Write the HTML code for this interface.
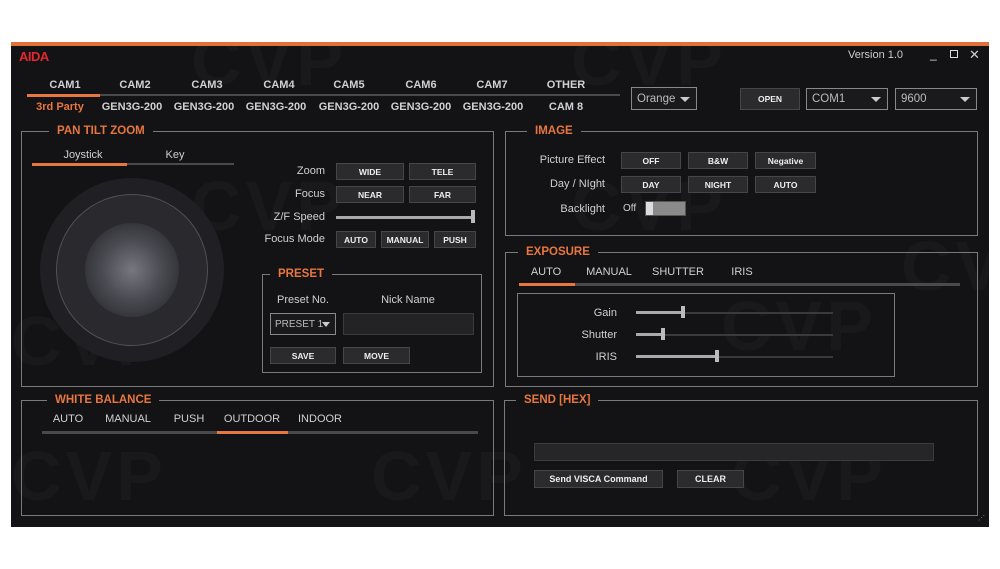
<!DOCTYPE html>
<html><head><meta charset="utf-8"><style>
*{margin:0;padding:0;box-sizing:border-box}
body{width:1000px;height:569px;background:#fff;position:relative;overflow:hidden;font-family:"Liberation Sans",sans-serif}
.a{position:absolute}
#win{position:absolute;left:11px;top:42px;width:978px;height:485px;background:#131315;border-top:4px solid #e0713a;overflow:hidden}
.t{position:absolute;color:#d0d0d0;font-size:11px;white-space:nowrap}
.c{transform:translateX(-50%)}
.r{transform:translateX(-100%)}
.b{font-weight:bold}
.o{color:#e8763f}
.box{position:absolute;border:1px solid #7a7a7a}
.ttl{position:absolute;background:#131315;color:#e8763f;font-weight:bold;font-size:11.5px;padding:0 8px;top:-8px;line-height:14px}
.btn{position:absolute;background:#2b2b2d;border:1px solid #464648;color:#eee;font-weight:bold;font-size:8.5px;text-align:center;display:flex;align-items:center;justify-content:center}
.dd{position:absolute;border:1px solid #888;background:#1a1a1c;color:#bbb;font-size:11.5px;padding-left:5px;display:flex;align-items:center}
.dd i{position:absolute;right:6px;top:50%;margin-top:-2px;border-left:5px solid transparent;border-right:5px solid transparent;border-top:5px solid #ccc}
.ln{position:absolute;height:3px;background:#4a4a4c}
.ol{position:absolute;height:3px;background:#e8763f}
.wm{position:absolute;color:#19191c;font-size:70px;font-weight:bold;letter-spacing:4px}
</style></head><body>
<div id="win">
<div class="wm" style="left:180px;top:-25px">CVP</div>
<div class="wm" style="left:560px;top:-25px">CVP</div>
<div class="wm" style="left:180px;top:120px">CVP</div>
<div class="wm" style="left:560px;top:120px">CVP</div>
<div class="wm" style="left:710px;top:240px">CVP</div>
<div class="wm" style="left:0px;top:255px">CVP</div>
<div class="wm" style="left:360px;top:390px">CVP</div>
<div class="wm" style="left:0px;top:390px">CVP</div>
<div class="wm" style="left:720px;top:390px">CVP</div>
<div class="wm" style="left:890px;top:180px">CV</div>
</div>
<div class="a" style="left:0;top:0">
<div class="t b" style="left:19px;top:49px;color:#e0282e;font-size:13px;letter-spacing:-0.5px">AIDA</div>
<div class="t" style="left:848px;top:49px;color:#ccc">Version 1.0</div>
<div class="t" style="left:930px;top:47px;color:#ddd;font-size:12px">_</div>
<div class="a" style="left:950px;top:50px;width:8px;height:8px;border:1px solid #ddd"></div>
<div class="t" style="left:969px;top:47px;font-size:13px">✕</div>

<div class="t b c" style="left:65px;top:79px">CAM1</div>
<div class="t b c" style="left:135px;top:79px">CAM2</div>
<div class="t b c" style="left:207px;top:79px">CAM3</div>
<div class="t b c" style="left:279px;top:79px">CAM4</div>
<div class="t b c" style="left:349px;top:79px">CAM5</div>
<div class="t b c" style="left:421px;top:79px">CAM6</div>
<div class="t b c" style="left:492px;top:79px">CAM7</div>
<div class="t b c" style="left:566px;top:79px">OTHER</div>
<div class="ln" style="left:27px;top:94px;width:593px;height:2px"></div>
<div class="ol" style="left:27px;top:94px;width:73px;height:3px"></div>
<div class="t b c o" style="left:60px;top:101px">3rd Party</div>
<div class="t b c" style="left:132px;top:101px">GEN3G-200</div>
<div class="t b c" style="left:204px;top:101px">GEN3G-200</div>
<div class="t b c" style="left:276px;top:101px">GEN3G-200</div>
<div class="t b c" style="left:349px;top:101px">GEN3G-200</div>
<div class="t b c" style="left:421px;top:101px">GEN3G-200</div>
<div class="t b c" style="left:493px;top:101px">GEN3G-200</div>
<div class="t b c" style="left:566px;top:101px">CAM 8</div>

<div class="dd" style="left:631px;top:87px;width:66px;height:23px">Orange<i></i></div>
<div class="btn" style="left:740px;top:88px;width:60px;height:22px">OPEN</div>
<div class="dd" style="left:806px;top:88px;width:82px;height:22px">COM1<i></i></div>
<div class="dd" style="left:895px;top:88px;width:82px;height:22px">9600<i></i></div>

<!-- PTZ -->
<div class="box" style="left:21px;top:131px;width:473px;height:256px"><div class="ttl" style="left:27px">PAN TILT ZOOM</div></div>
<div class="t c" style="left:83px;top:149px">Joystick</div>
<div class="t c" style="left:175px;top:149px">Key</div>
<div class="ln" style="left:32px;top:163px;width:202px;height:2px"></div>
<div class="ol" style="left:32px;top:163px;width:95px"></div>
<div class="a" style="left:40px;top:178px;width:184px;height:184px;border-radius:50%;background:#202024"></div>
<div class="a" style="left:56px;top:194px;width:152px;height:152px;border-radius:50%;background:#29292e;border:1px solid #505056"></div>
<div class="a" style="left:85px;top:223px;width:94px;height:94px;border-radius:50%;background:radial-gradient(circle at 50% 50%,#777780 0%,#4a4a52 45%,#1e1e22 100%)"></div>

<div class="t r" style="left:325px;top:165px">Zoom</div>
<div class="btn" style="left:336px;top:163px;width:68px;height:17px">WIDE</div>
<div class="btn" style="left:409px;top:163px;width:67px;height:17px">TELE</div>
<div class="t r" style="left:325px;top:188px">Focus</div>
<div class="btn" style="left:336px;top:186px;width:68px;height:17px">NEAR</div>
<div class="btn" style="left:409px;top:186px;width:67px;height:17px">FAR</div>
<div class="t r" style="left:325px;top:211px">Z/F Speed</div>
<div class="a" style="left:336px;top:216px;width:136px;height:3px;background:#aaa"></div>
<div class="a" style="left:471px;top:210px;width:4px;height:13px;background:#bbb"></div>
<div class="t r" style="left:325px;top:233px">Focus Mode</div>
<div class="btn" style="left:336px;top:231px;width:40px;height:17px">AUTO</div>
<div class="btn" style="left:381px;top:231px;width:48px;height:17px">MANUAL</div>
<div class="btn" style="left:434px;top:231px;width:42px;height:17px">PUSH</div>

<div class="box" style="left:262px;top:274px;width:220px;height:99px"><div class="ttl" style="left:7px">PRESET</div></div>
<div class="t c" style="left:303px;top:294px">Preset No.</div>
<div class="t c" style="left:408px;top:294px">Nick Name</div>
<div class="dd" style="left:270px;top:313px;width:66px;height:22px;font-size:10px;padding-left:4px">PRESET 1<i style="right:5px;border-left-width:4px;border-right-width:4px"></i></div>
<div class="a" style="left:343px;top:313px;width:131px;height:22px;background:#232325;border:1px solid #3a3a3c"></div>
<div class="btn" style="left:270px;top:347px;width:66px;height:17px">SAVE</div>
<div class="btn" style="left:343px;top:347px;width:67px;height:17px">MOVE</div>

<!-- IMAGE -->
<div class="box" style="left:505px;top:131px;width:473px;height:105px"><div class="ttl" style="left:21px">IMAGE</div></div>
<div class="t r" style="left:605px;top:154px">Picture Effect</div>
<div class="btn" style="left:621px;top:152px;width:60px;height:17px">OFF</div>
<div class="btn" style="left:688px;top:152px;width:60px;height:17px">B&amp;W</div>
<div class="btn" style="left:755px;top:152px;width:61px;height:17px">Negative</div>
<div class="t r" style="left:605px;top:178px">Day / NIght</div>
<div class="btn" style="left:621px;top:176px;width:60px;height:17px">DAY</div>
<div class="btn" style="left:688px;top:176px;width:60px;height:17px">NIGHT</div>
<div class="btn" style="left:755px;top:176px;width:61px;height:17px">AUTO</div>
<div class="t r" style="left:605px;top:203px">Backlight</div>
<div class="t" style="left:623px;top:203px;font-size:10px">Off</div>
<div class="a" style="left:645px;top:201px;width:41px;height:15px;background:#8a8a8a;border:1px solid #555"></div>
<div class="a" style="left:646px;top:202px;width:7px;height:13px;background:#ddd"></div>

<!-- EXPOSURE -->
<div class="box" style="left:505px;top:252px;width:473px;height:135px"><div class="ttl" style="left:12px">EXPOSURE</div></div>
<div class="t c" style="left:546px;top:266px">AUTO</div>
<div class="t c" style="left:609px;top:266px">MANUAL</div>
<div class="t c" style="left:678px;top:266px">SHUTTER</div>
<div class="t c" style="left:742px;top:266px">IRIS</div>
<div class="ln" style="left:519px;top:283px;width:441px;height:3px"></div>
<div class="ol" style="left:519px;top:283px;width:56px"></div>
<div class="box" style="left:517px;top:293px;width:378px;height:84px"></div>
<div class="t r" style="left:617px;top:307px">Gain</div>
<div class="a" style="left:636px;top:312px;width:197px;height:2px;background:#3a3a3c"></div>
<div class="a" style="left:636px;top:311px;width:47px;height:3px;background:#aaa"></div>
<div class="a" style="left:681px;top:306px;width:4px;height:12px;background:#bbb"></div>
<div class="t r" style="left:617px;top:329px">Shutter</div>
<div class="a" style="left:636px;top:334px;width:197px;height:2px;background:#3a3a3c"></div>
<div class="a" style="left:636px;top:333px;width:27px;height:3px;background:#aaa"></div>
<div class="a" style="left:661px;top:328px;width:4px;height:12px;background:#bbb"></div>
<div class="t r" style="left:617px;top:351px">IRIS</div>
<div class="a" style="left:636px;top:356px;width:197px;height:2px;background:#3a3a3c"></div>
<div class="a" style="left:636px;top:355px;width:81px;height:3px;background:#aaa"></div>
<div class="a" style="left:715px;top:350px;width:4px;height:12px;background:#bbb"></div>

<!-- WB -->
<div class="box" style="left:21px;top:400px;width:473px;height:116px"><div class="ttl" style="left:25px">WHITE BALANCE</div></div>
<div class="t c" style="left:68px;top:413px">AUTO</div>
<div class="t c" style="left:128px;top:413px">MANUAL</div>
<div class="t c" style="left:189px;top:413px">PUSH</div>
<div class="t c" style="left:252px;top:413px">OUTDOOR</div>
<div class="t c" style="left:320px;top:413px">INDOOR</div>
<div class="ln" style="left:42px;top:431px;width:436px"></div>
<div class="ol" style="left:217px;top:431px;width:71px"></div>

<!-- SEND -->
<div class="box" style="left:504px;top:400px;width:474px;height:116px"><div class="ttl" style="left:11px">SEND [HEX]</div></div>
<div class="a" style="left:534px;top:443px;width:400px;height:18px;background:#262628;border:1px solid #3a3a3c"></div>
<div class="btn" style="left:534px;top:470px;width:129px;height:18px;font-size:9px">Send VISCA Command</div>
<div class="btn" style="left:677px;top:470px;width:67px;height:18px;font-size:9px">CLEAR</div>
<div class="t" style="left:978px;top:514px;font-size:7px;color:#888">⋰</div>
</div>
</body></html>
